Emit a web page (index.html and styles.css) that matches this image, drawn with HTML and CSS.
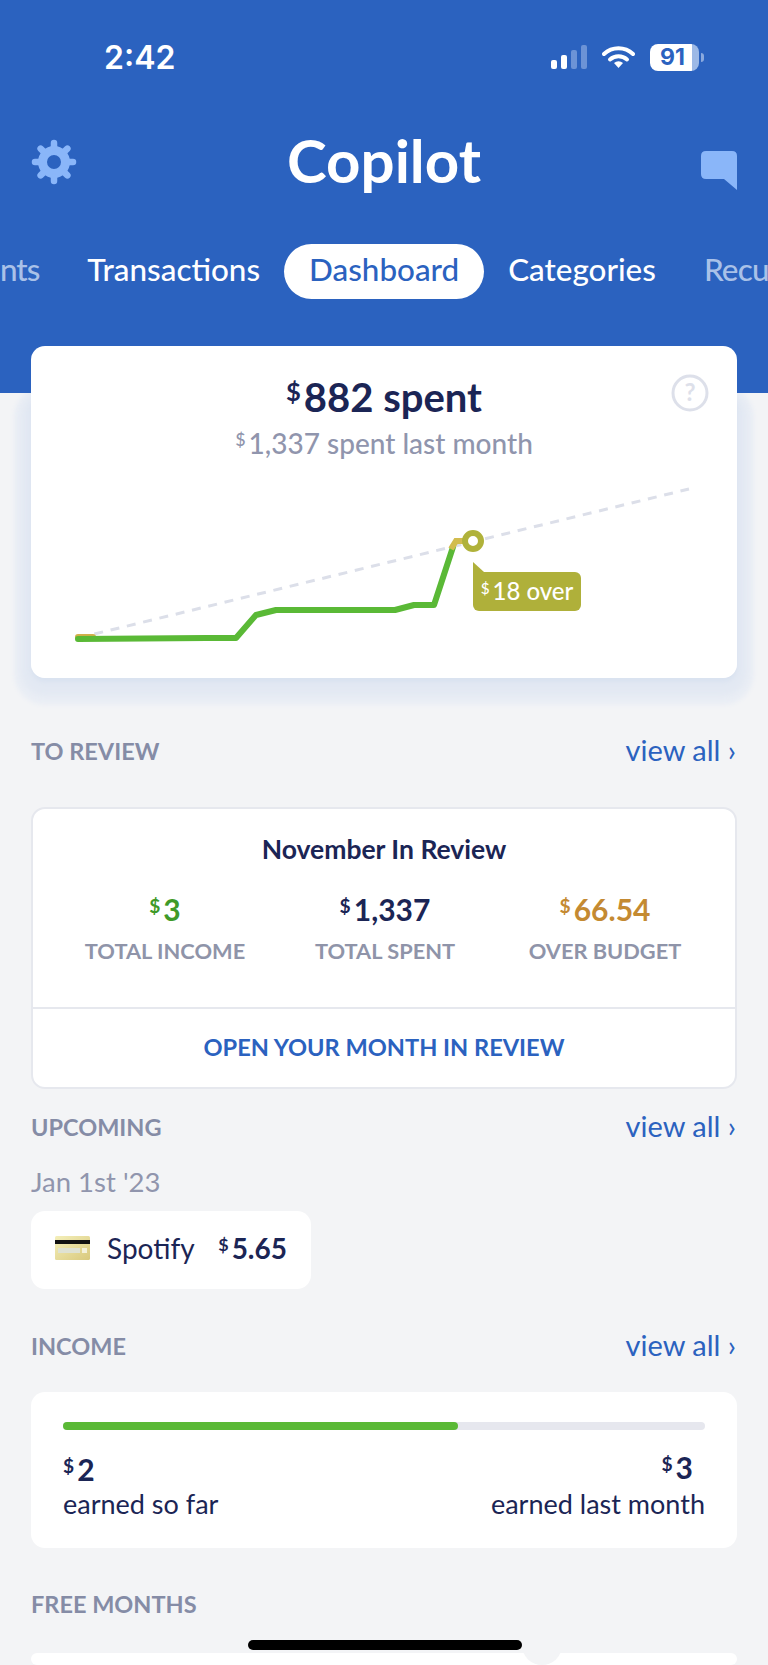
FILE: index.html
```html
<!DOCTYPE html>
<html lang="en">

<head>
    <meta charset="UTF-8">
    <meta name="viewport" content="width=device-width, initial-scale=1.0">
    <title>Copilot Dashboard</title>
    <link rel="stylesheet" href="styles.css">
</head>

<body>
    <header class="header">
        <!-- Status bar -->
        <div class="status">
            <span class="time">2:42</span>
            <div class="status-icons">
                <div class="signal">
                    <span class="signal-bar bar-1"></span>
                    <span class="signal-bar bar-2"></span>
                    <span class="signal-bar bar-3"></span>
                    <span class="signal-bar bar-4"></span>
                </div>
                <svg class="wifi" width="33" height="22" viewBox="0 0 33 22">
                    <path d="M2 8 A21 21 0 0 1 31 8" fill="none" stroke="#fff" stroke-width="4" stroke-linecap="round" />
                    <path d="M8 13.5 A13 13 0 0 1 25 13.5" fill="none" stroke="#fff" stroke-width="4" stroke-linecap="round" />
                    <path d="M12 17 L16.5 22 L21 17 A7 7 0 0 0 12 17 Z" fill="#fff" />
                </svg>
                <div class="battery">
                    <span class="battery-level">91</span>
                    <span class="battery-nub"></span>
                </div>
            </div>
        </div>

        <div class="title-row">
            <svg class="gear" width="46" height="46" viewBox="0 0 46 46">
                <circle cx="23" cy="23" r="11.5" fill="none" stroke="#8ab6f9" stroke-width="9" />
                <g stroke="#8ab6f9" stroke-width="6.5" stroke-linecap="round">
                    <line x1="23" y1="8" x2="23" y2="4" />
                    <line x1="23" y1="38" x2="23" y2="42" />
                    <line x1="8" y1="23" x2="4" y2="23" />
                    <line x1="38" y1="23" x2="42" y2="23" />
                    <line x1="12.4" y1="12.4" x2="9.6" y2="9.6" />
                    <line x1="33.6" y1="12.4" x2="36.4" y2="9.6" />
                    <line x1="12.4" y1="33.6" x2="9.6" y2="36.4" />
                    <line x1="33.6" y1="33.6" x2="36.4" y2="36.4" />
                </g>
            </svg>
            <h1 class="app-title">Copilot</h1>
            <svg class="chat" width="36" height="39" viewBox="0 0 36 39">
                <path d="M5 0 H31 Q36 0 36 5 V39 L23 28 H5 Q0 28 0 23 V5 Q0 0 5 0 Z" fill="#8ab6f9" />
            </svg>
        </div>

        <nav class="tabs">
            <span class="tab tab-faded tab-first">nts</span>
            <span class="tab">Transactions</span>
            <span class="tab tab-active">Dashboard</span>
            <span class="tab">Categories</span>
            <span class="tab tab-faded tab-last">Recu</span>
        </nav>
    </header>

    <main class="content">
        <!-- Spend chart -->
        <section class="card spend-card">
            <h2 class="spend-title"><span class="cur">$</span>882 spent</h2>
            <p class="spend-sub"><span class="cur">$</span>1,337 spent last month</p>
            <svg class="help" width="38" height="38" viewBox="0 0 38 38">
                <circle cx="19" cy="19" r="17" fill="none" stroke="#dde0ea" stroke-width="3" />
                <text x="19" y="27" text-anchor="middle" class="help-mark">?</text>
            </svg>
            <div class="chart">
                <svg width="706" height="190" viewBox="0 0 706 190">
                    <line x1="47" y1="160" x2="658" y2="11" stroke="#dcdfe9" stroke-width="3" stroke-dasharray="9 7.76" />
                    <path d="M47 159 H62" fill="none" stroke="#d2b04a" stroke-width="6" stroke-linecap="round" />
                    <polyline points="47,161 175,160 205,160 225,137 245,132 364,132 383,127 403,127 422,69" fill="none" stroke="#5ab936" stroke-width="6" stroke-linejoin="round" stroke-linecap="round" />
                    <path d="M420 71 L425 63 H442" fill="none" stroke="#d2bc4e" stroke-width="6" />
                    <circle cx="442" cy="63" r="8" fill="#fff" stroke="#b0b23a" stroke-width="6" />
                </svg>
                <div class="over-tip"><span class="cur">$</span>18 over</div>
            </div>
        </section>

        <div class="section-head head-review">
            <span class="section-label">TO REVIEW</span>
            <span class="view-all">view all ›</span>
        </div>

        <section class="review-card">
            <div class="review-body">
                <h3 class="review-title">November In Review</h3>
                <div class="stats">
                    <div class="stat">
                        <div class="stat-value value-green"><span class="cur">$</span>3</div>
                        <div class="stat-label">TOTAL INCOME</div>
                    </div>
                    <div class="stat">
                        <div class="stat-value"><span class="cur">$</span>1,337</div>
                        <div class="stat-label">TOTAL SPENT</div>
                    </div>
                    <div class="stat">
                        <div class="stat-value value-orange"><span class="cur">$</span>66.54</div>
                        <div class="stat-label">OVER BUDGET</div>
                    </div>
                </div>
            </div>
            <div class="review-link">OPEN YOUR MONTH IN REVIEW</div>
        </section>

        <div class="section-head head-upcoming">
            <span class="section-label">UPCOMING</span>
            <span class="view-all">view all ›</span>
        </div>
        <div class="date-label">Jan 1st '23</div>
        <div class="bill-chip">
            <svg class="bill-card" width="35" height="24" viewBox="0 0 35 24">
                <defs>
                    <linearGradient id="goldCard" x1="0" y1="0" x2="1" y2="1">
                        <stop offset="0" stop-color="#f4efba" />
                        <stop offset="1" stop-color="#d9c97d" />
                    </linearGradient>
                </defs>
                <rect width="35" height="24" rx="1.5" fill="url(#goldCard)" />
                <rect y="4" width="35" height="4" fill="#111" />
                <rect x="3" y="12" width="22" height="5" fill="#dfe2d2" />
                <rect x="27" y="12" width="5" height="5" fill="#f4f1da" />
            </svg>
            <span class="bill-name">Spotify</span>
            <span class="bill-amount"><span class="cur">$</span>5.65</span>
        </div>

        <div class="section-head head-income">
            <span class="section-label">INCOME</span>
            <span class="view-all">view all ›</span>
        </div>
        <section class="card income-card">
            <div class="progress">
                <div class="progress-fill" style="width: 61.5%"></div>
            </div>
            <div class="income-row">
                <div class="income-col">
                    <div class="income-value"><span class="cur">$</span>2</div>
                    <div class="income-label">earned so far</div>
                </div>
                <div class="income-col income-col-right">
                    <div class="income-value income-value-right"><span class="cur">$</span>3</div>
                    <div class="income-label">earned last month</div>
                </div>
            </div>
        </section>

        <div class="section-head head-free">
            <span class="section-label">FREE MONTHS</span>
        </div>
        <section class="card free-card"></section>
    </main>

    <div class="home-bump"></div>
    <div class="home-indicator"></div>
</body>

</html>
```

FILE: styles.css
```css
* {
    box-sizing: border-box;
}

body {
    font-family: Lato, "Noto Sans", sans-serif;
    margin: 0;
    padding: 0;
    width: 768px;
    height: 1665px;
    overflow: hidden;
    position: relative;
    background: #f3f4f6;
    color: #1b2555;
}

h1,
h2,
h3,
p {
    margin: 0;
}

.cur {
    font-size: 0.64em;
    vertical-align: 0.42em;
    line-height: 0;
    margin-right: 3px;
}

/* Header */
.header {
    height: 393px;
    background: #2b62bf;
    color: #fff;
}

.status {
    height: 114px;
    padding: 0 64px 0 104px;
    display: flex;
    justify-content: space-between;
    align-items: center;
}

.time {
    font-family: Inter, sans-serif;
    font-size: 32px;
    font-weight: 600;
}

.status-icons {
    display: flex;
    align-items: center;
    gap: 15px;
}

.signal {
    display: flex;
    align-items: flex-end;
    gap: 4px;
    height: 24px;
}

.signal-bar {
    width: 6px;
    border-radius: 2px;
    background: #fff;
}

.bar-1 {
    height: 9px;
}

.bar-2 {
    height: 14px;
}

.bar-3 {
    height: 19px;
    background: #6c93d6;
}

.bar-4 {
    height: 24px;
    background: #6c93d6;
}

.battery {
    display: flex;
    align-items: center;
    gap: 2px;
}

.battery-level {
    width: 49px;
    height: 27px;
    border-radius: 8px;
    background: linear-gradient(90deg, #fff 86%, #9db9e6 86%);
    color: #2b62bf;
    font-family: Inter, sans-serif;
    font-size: 23px;
    font-weight: 700;
    line-height: 27px;
    padding-left: 10px;
}

.battery-nub {
    width: 3px;
    height: 9px;
    border-radius: 0 3px 3px 0;
    background: #8aa9de;
}

.title-row {
    height: 96px;
    padding: 0 31px;
    display: grid;
    grid-template-columns: 1fr auto 1fr;
    align-items: center;
}

.app-title {
    font-size: 60px;
    font-weight: 700;
    line-height: 66px;
    margin-bottom: 5px;
}

.chat {
    justify-self: end;
    margin-top: 17px;
}

.tabs {
    margin-top: 34px;
    height: 55px;
    display: flex;
    align-items: flex-start;
    overflow: hidden;
}

.tab {
    flex-shrink: 0;
    padding: 1px 24px 0;
    font-size: 31.4px;
    font-weight: 500;
    line-height: 49px;
}

.tab-first {
    padding: 1px 24px 0 0;
    letter-spacing: -1px;
}

.tab-last {
    padding: 1px 0 0 24px;
    letter-spacing: -0.8px;
}

.tab-faded {
    color: #a9c1e8;
}

.tab-active {
    height: 55px;
    border-radius: 28px;
    padding: 1px 25px 0;
    background: #fff;
    color: #2b62bf;
}

/* Main column */
.content {
    margin-top: -47px;
    padding: 0 31px;
}

.card {
    background: #fff;
    border-radius: 14px;
}

.spend-card {
    position: relative;
    height: 332px;
    padding-top: 28px;
    text-align: center;
}

/* shadow only shows below the blue header */
.spend-card::before {
    content: "";
    position: absolute;
    z-index: -1;
    inset: 47px 0 0 0;
    border-radius: 14px;
    box-shadow: 0 4px 5px #d9e2f0, 0 8px 6px 10px #e3e9f3, 0 10px 4px 17px #eaeef5;
    clip-path: inset(0 -40px -50px -40px);
}

.spend-title {
    font-size: 40px;
    font-weight: 700;
    line-height: 46px;
}

.spend-sub {
    margin-top: 6px;
    font-size: 28px;
    font-weight: 500;
    line-height: 34px;
    color: #9095ad;
}

.help {
    position: absolute;
    top: 28px;
    right: 28px;
}

.help-mark {
    font-size: 24px;
    font-weight: 700;
    fill: #dde0ea;
}

.chart {
    position: relative;
    margin-top: 18px;
}

.chart svg {
    display: block;
}

.over-tip {
    position: absolute;
    left: 442px;
    top: 94px;
    width: 108px;
    height: 39px;
    border-radius: 0 6px 6px 6px;
    background: #afb03a;
    color: #fff;
    font-size: 24px;
    font-weight: 500;
    line-height: 37px;
    text-align: center;
}

.over-tip::before {
    content: "";
    position: absolute;
    left: 0;
    top: -10px;
    border-left: 11px solid #afb03a;
    border-top: 10px solid transparent;
}

.section-head {
    height: 40px;
    display: flex;
    justify-content: space-between;
    align-items: center;
}

.head-review {
    margin-top: 53px;
}

.head-upcoming {
    margin-top: 18px;
}

.head-income {
    margin-top: 37px;
}

.head-free {
    margin-top: 36px;
}

.section-label {
    font-size: 23.5px;
    font-weight: 700;
    color: #858ca6;
}

.view-all {
    font-size: 29px;
    color: #2b62bf;
    margin-bottom: 3px;
    margin-right: 1px;
}

/* Month in review */
.review-card {
    margin-top: 36px;
    height: 282px;
    background: #fff;
    border: 2px solid #e6e8ee;
    border-radius: 14px;
}

.review-body {
    height: 200px;
    padding-top: 24px;
    border-bottom: 2px solid #e6e8ee;
}

.review-title {
    font-size: 26.5px;
    font-weight: 700;
    line-height: 32px;
    text-align: center;
}

.stats {
    margin-top: 25px;
    padding: 0 22px;
    display: grid;
    grid-template-columns: repeat(3, 220px);
}

.stat {
    text-align: center;
}

.stat-value {
    font-size: 30px;
    font-weight: 700;
    line-height: 38px;
}

.value-green {
    color: #3f9a28;
}

.value-orange {
    color: #c48a32;
}

.stat-label {
    margin-top: 9px;
    font-size: 21.8px;
    font-weight: 700;
    line-height: 28px;
    color: #8f94a9;
}

.review-link {
    height: 76px;
    font-size: 23.6px;
    font-weight: 700;
    line-height: 76px;
    text-align: center;
    color: #2b62bf;
}

/* Upcoming */
.date-label {
    margin-top: 17px;
    height: 36px;
    font-size: 27.5px;
    line-height: 36px;
    color: #9095ad;
}

.bill-chip {
    margin-top: 11px;
    width: 280px;
    height: 78px;
    padding: 0 24px 4px;
    display: flex;
    align-items: center;
    background: #fff;
    border-radius: 14px;
}

.bill-name {
    margin-left: 17px;
    font-size: 28px;
}

.bill-amount {
    margin-left: auto;
    font-size: 28px;
    font-weight: 700;
}

/* Income */
.income-card {
    margin-top: 26px;
    height: 156px;
    padding: 30px 32px 0;
}

.progress {
    height: 8px;
    border-radius: 4px;
    background: #e6e7ee;
}

.progress-fill {
    height: 8px;
    border-radius: 4px;
    background: #5ab936;
}

.income-row {
    margin-top: 21px;
    display: flex;
    justify-content: space-between;
}

.income-col-right {
    text-align: right;
}

.income-value {
    font-size: 30px;
    font-weight: 700;
    line-height: 36px;
}

.income-value-right {
    margin-top: -2px;
    margin-right: 12px;
}

.income-label {
    font-size: 27px;
    line-height: 34px;
}

.income-col-right .income-label {
    margin-top: 2px;
}

.free-card {
    margin-top: 29px;
    height: 12px;
}

/* Home indicator lies over the page */
.home-indicator {
    position: absolute;
    left: 248px;
    top: 1640px;
    width: 274px;
    height: 10px;
    border-radius: 5px;
    background: #000;
}

.home-bump {
    position: absolute;
    left: 522px;
    top: 1630px;
    width: 40px;
    height: 35px;
    border-radius: 0 0 20px 20px;
    background: #f3f4f6;
}
```
